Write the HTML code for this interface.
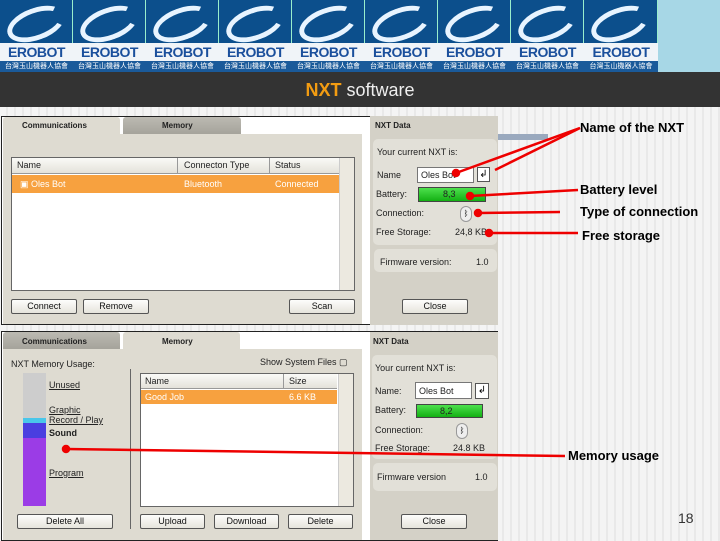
<!DOCTYPE html>
<html><head><meta charset="utf-8"><style>
*{margin:0;padding:0;box-sizing:border-box}
body{width:720px;height:540px;position:relative;overflow:hidden;font-family:"Liberation Sans",sans-serif;background:repeating-linear-gradient(90deg,#f4f4f4 0 6px,#e9e9e9 6px 8px)}
.a{position:absolute}
.t{font-size:9px;color:#222;position:absolute;white-space:nowrap}
.btn{position:absolute;background:linear-gradient(#fdfdfb,#e6e4dc);border:1px solid #555;border-radius:2px;font-size:9px;text-align:center;line-height:13px;color:#111}
.lbl{font-weight:bold;font-size:13px;color:#000;position:absolute;white-space:nowrap}
.logo{position:absolute;top:0;width:73px;height:72px;background:#0c4f8c;border-right:1px solid #9ec}
.logo .s{position:absolute;left:6px;top:8px;width:60px;height:32px;border:5px solid #e8f4ff;border-radius:50%;border-color:#e8f4ff transparent #e8f4ff #e8f4ff;transform:rotate(-20deg)}
.logo .w{position:absolute;left:0;top:43px;width:73px;height:18px;background:#f0f4f8;color:#1a4f9c;font-weight:bold;font-size:14px;line-height:18px;text-align:center;letter-spacing:-0.5px}
.logo .c{position:absolute;left:0;top:61px;width:73px;height:11px;background:#1a5a9a;color:#fff;font-size:7px;line-height:11px;text-align:center;font-family:"Liberation Sans","Noto Sans CJK TC",sans-serif}
</style></head><body>
<div class="a" style="left:0;top:0;width:720px;height:72px;background:#a7d7e6"></div>
<div class="a" style="left:0;top:0;width:658px;height:72px;background:#0c4f8c"></div>
<div class="logo" style="left:0"><div class="s"></div><div class="w">EROBOT</div><div class="c">台灣玉山機器人協會</div></div>
<div class="logo" style="left:73px"><div class="s"></div><div class="w">EROBOT</div><div class="c">台灣玉山機器人協會</div></div>
<div class="logo" style="left:146px"><div class="s"></div><div class="w">EROBOT</div><div class="c">台灣玉山機器人協會</div></div>
<div class="logo" style="left:219px"><div class="s"></div><div class="w">EROBOT</div><div class="c">台灣玉山機器人協會</div></div>
<div class="logo" style="left:292px"><div class="s"></div><div class="w">EROBOT</div><div class="c">台灣玉山機器人協會</div></div>
<div class="logo" style="left:365px"><div class="s"></div><div class="w">EROBOT</div><div class="c">台灣玉山機器人協會</div></div>
<div class="logo" style="left:438px"><div class="s"></div><div class="w">EROBOT</div><div class="c">台灣玉山機器人協會</div></div>
<div class="logo" style="left:511px"><div class="s"></div><div class="w">EROBOT</div><div class="c">台灣玉山機器人協會</div></div>
<div class="logo" style="left:584px;width:74px"><div class="s"></div><div class="w" style="width:74px">EROBOT</div><div class="c" style="width:74px">台灣玉山機器人協會</div></div>
<div class="a" style="left:0;top:72px;width:720px;height:35px;background:#333;text-align:center;line-height:37px;font-size:18px;color:#eee"><span style="color:#f39c12;font-weight:bold">NXT</span> software</div>
<div class="a" style="left:497px;top:134px;width:51px;height:6px;background:#9aa9be"></div>

<!-- screenshot 1 -->
<div class="a" style="left:1px;top:116px;width:497px;height:209px;background:#fff;border:1px solid #222"></div>
<div class="a" style="left:3px;top:117px;width:117px;height:18px;background:#dedbd1;border-radius:3px 3px 0 0"></div>
<div class="t" style="left:22px;top:121px;font-weight:bold;font-size:8px">Communications</div>
<div class="a" style="left:123px;top:117px;width:118px;height:17px;background:linear-gradient(#bcbab2,#a5a39b);border-radius:3px 3px 0 0"></div>
<div class="t" style="left:162px;top:121px;font-weight:bold;font-size:8px">Memory</div>
<div class="a" style="left:3px;top:134px;width:359px;height:190px;background:#dedbd1"></div>
<div class="a" style="left:11px;top:157px;width:344px;height:134px;background:#fff;border:1px solid #666"></div>
<div class="a" style="left:12px;top:158px;width:327px;height:16px;background:linear-gradient(#fafaf7,#e4e2da);border-bottom:1px solid #999"></div>
<div class="a" style="left:177px;top:158px;width:1px;height:16px;background:#999"></div>
<div class="a" style="left:269px;top:158px;width:1px;height:16px;background:#999"></div>
<div class="t" style="left:17px;top:160px">Name</div><div class="t" style="left:184px;top:160px">Connecton Type</div><div class="t" style="left:275px;top:160px">Status</div>
<div class="a" style="left:12px;top:175px;width:327px;height:18px;background:#f7a13f"></div>
<div class="t" style="left:20px;top:179px;color:#fff">▣ Oles Bot</div><div class="t" style="left:184px;top:179px;color:#fff">Bluetooth</div><div class="t" style="left:275px;top:179px;color:#fff">Connected</div>
<div class="a" style="left:339px;top:158px;width:15px;height:132px;background:#ece9e0;border-left:1px solid #ccc"></div>
<div class="btn" style="left:11px;top:299px;width:66px;height:15px">Connect</div>
<div class="btn" style="left:83px;top:299px;width:66px;height:15px">Remove</div>
<div class="btn" style="left:289px;top:299px;width:66px;height:15px">Scan</div>
<div class="a" style="left:370px;top:116px;width:128px;height:209px;background:#d4d1c7"></div>
<div class="t" style="left:375px;top:121px;font-weight:bold;font-size:8px">NXT Data</div>
<div class="a" style="left:373px;top:139px;width:124px;height:106px;background:#e2e0d8;border-radius:5px"></div>
<div class="t" style="left:377px;top:147px">Your current NXT is:</div>
<div class="t" style="left:377px;top:170px">Name</div>
<div class="a" style="left:417px;top:167px;width:57px;height:16px;background:#fff;border:1px solid #777"></div><div class="t" style="left:421px;top:170px">Oles Bot</div>
<div class="a" style="left:477px;top:167px;width:13px;height:15px;background:#fff;border:1px solid #555;font-size:10px;line-height:13px;text-align:center">↲</div>
<div class="t" style="left:376px;top:189px">Battery:</div>
<div class="a" style="left:418px;top:187px;width:68px;height:15px;background:linear-gradient(#4de04d,#14b014);border:1px solid #444"></div><div class="t" style="left:443px;top:189px">8,3</div>
<div class="t" style="left:376px;top:208px">Connection:</div>
<div class="a" style="left:460px;top:206px;width:12px;height:16px;border-radius:6px;background:#eee;border:1px solid #999;font-size:8px;text-align:center;line-height:14px">ᛒ</div>
<div class="t" style="left:376px;top:227px">Free Storage:</div><div class="t" style="left:455px;top:227px">24,8 KB</div>
<div class="a" style="left:374px;top:249px;width:123px;height:23px;background:#e2e0d8;border-radius:5px"></div>
<div class="t" style="left:380px;top:257px">Firmware version:</div><div class="t" style="left:476px;top:257px">1.0</div>
<div class="btn" style="left:402px;top:299px;width:66px;height:15px">Close</div>

<!-- screenshot 2 -->
<div class="a" style="left:1px;top:331px;width:497px;height:210px;background:#fff;border:1px solid #222"></div>
<div class="a" style="left:3px;top:332px;width:117px;height:17px;background:linear-gradient(#bcbab2,#a5a39b);border-radius:3px 3px 0 0"></div>
<div class="t" style="left:22px;top:337px;font-weight:bold;font-size:8px">Communications</div>
<div class="a" style="left:123px;top:332px;width:117px;height:18px;background:#dedbd1;border-radius:3px 3px 0 0"></div>
<div class="t" style="left:162px;top:337px;font-weight:bold;font-size:8px">Memory</div>
<div class="a" style="left:3px;top:349px;width:359px;height:191px;background:#dedbd1"></div>
<div class="t" style="left:11px;top:359px">NXT Memory Usage:</div>
<div class="a" style="left:23px;top:373px;width:23px;height:133px;background:#9b3ce6"></div>
<div class="a" style="left:23px;top:373px;width:23px;height:45px;background:#cdcdcd"></div>
<div class="a" style="left:23px;top:418px;width:23px;height:5px;background:#49c6ea"></div>
<div class="a" style="left:23px;top:423px;width:23px;height:15px;background:#4a3ee0"></div>
<div class="t" style="left:49px;top:380px;text-decoration:underline">Unused</div>
<div class="t" style="left:49px;top:405px;text-decoration:underline">Graphic</div>
<div class="t" style="left:49px;top:415px;text-decoration:underline">Record / Play</div>
<div class="t" style="left:49px;top:428px;font-weight:bold">Sound</div>
<div class="t" style="left:49px;top:468px;text-decoration:underline">Program</div>
<div class="a" style="left:130px;top:369px;width:1px;height:160px;background:#666"></div>
<div class="t" style="left:260px;top:357px">Show System Files ▢</div>
<div class="a" style="left:140px;top:373px;width:214px;height:134px;background:#fff;border:1px solid #666"></div>
<div class="a" style="left:141px;top:374px;width:196px;height:15px;background:linear-gradient(#fafaf7,#e4e2da);border-bottom:1px solid #999"></div>
<div class="a" style="left:283px;top:374px;width:1px;height:15px;background:#999"></div>
<div class="t" style="left:145px;top:376px">Name</div><div class="t" style="left:289px;top:376px">Size</div>
<div class="a" style="left:141px;top:390px;width:196px;height:14px;background:#f7a13f"></div>
<div class="t" style="left:145px;top:392px;color:#fff">Good Job</div><div class="t" style="left:289px;top:392px;color:#fff">6.6 KB</div>
<div class="a" style="left:338px;top:374px;width:15px;height:132px;background:#ece9e0;border-left:1px solid #ccc"></div>
<div class="btn" style="left:17px;top:514px;width:96px;height:15px">Delete All</div>
<div class="btn" style="left:140px;top:514px;width:65px;height:15px">Upload</div>
<div class="btn" style="left:214px;top:514px;width:65px;height:15px">Download</div>
<div class="btn" style="left:288px;top:514px;width:65px;height:15px">Delete</div>
<div class="a" style="left:370px;top:332px;width:128px;height:208px;background:#d4d1c7"></div>
<div class="t" style="left:373px;top:337px;font-weight:bold;font-size:8px">NXT Data</div>
<div class="a" style="left:372px;top:355px;width:125px;height:104px;background:#e2e0d8;border-radius:5px"></div>
<div class="t" style="left:375px;top:363px">Your current NXT is:</div>
<div class="t" style="left:375px;top:386px">Name:</div>
<div class="a" style="left:415px;top:382px;width:57px;height:17px;background:#fff;border:1px solid #777"></div><div class="t" style="left:419px;top:386px">Oles Bot</div>
<div class="a" style="left:475px;top:383px;width:14px;height:16px;background:#fff;border:1px solid #555;font-size:10px;line-height:14px;text-align:center">↲</div>
<div class="t" style="left:375px;top:405px">Battery:</div>
<div class="a" style="left:416px;top:404px;width:67px;height:14px;background:linear-gradient(#4de04d,#14b014);border:1px solid #444"></div><div class="t" style="left:440px;top:406px">8,2</div>
<div class="t" style="left:375px;top:425px">Connection:</div>
<div class="a" style="left:456px;top:423px;width:12px;height:16px;border-radius:6px;background:#eee;border:1px solid #999;font-size:8px;text-align:center;line-height:14px">ᛒ</div>
<div class="t" style="left:375px;top:443px">Free Storage:</div><div class="t" style="left:453px;top:443px">24.8 KB</div>
<div class="a" style="left:373px;top:463px;width:124px;height:28px;background:#e2e0d8;border-radius:5px"></div>
<div class="t" style="left:377px;top:472px">Firmware version</div><div class="t" style="left:475px;top:472px">1.0</div>
<div class="btn" style="left:401px;top:514px;width:66px;height:15px">Close</div>

<svg class="a" style="left:0;top:0" width="720" height="540">
<g stroke="#e00" stroke-width="2.5" fill="#e00">
<line x1="580" y1="128" x2="456" y2="173"/><line x1="580" y1="128" x2="495" y2="170"/>
<line x1="578" y1="190" x2="470" y2="196"/><line x1="560" y1="212" x2="478" y2="213"/>
<line x1="578" y1="233" x2="489" y2="233"/><line x1="565" y1="456" x2="66" y2="449"/>
<circle cx="456" cy="173" r="3"/><circle cx="470" cy="196" r="3"/><circle cx="478" cy="213" r="3"/><circle cx="489" cy="233" r="3"/><circle cx="66" cy="449" r="3"/>
</g></svg>
<div class="lbl" style="left:580px;top:120px">Name of the NXT</div>
<div class="lbl" style="left:580px;top:182px">Battery level</div>
<div class="lbl" style="left:580px;top:204px">Type of connection</div>
<div class="lbl" style="left:582px;top:228px">Free storage</div>
<div class="lbl" style="left:568px;top:448px">Memory usage</div>
<div class="a" style="left:678px;top:510px;font-size:14px;color:#333">18</div>
</body></html>
